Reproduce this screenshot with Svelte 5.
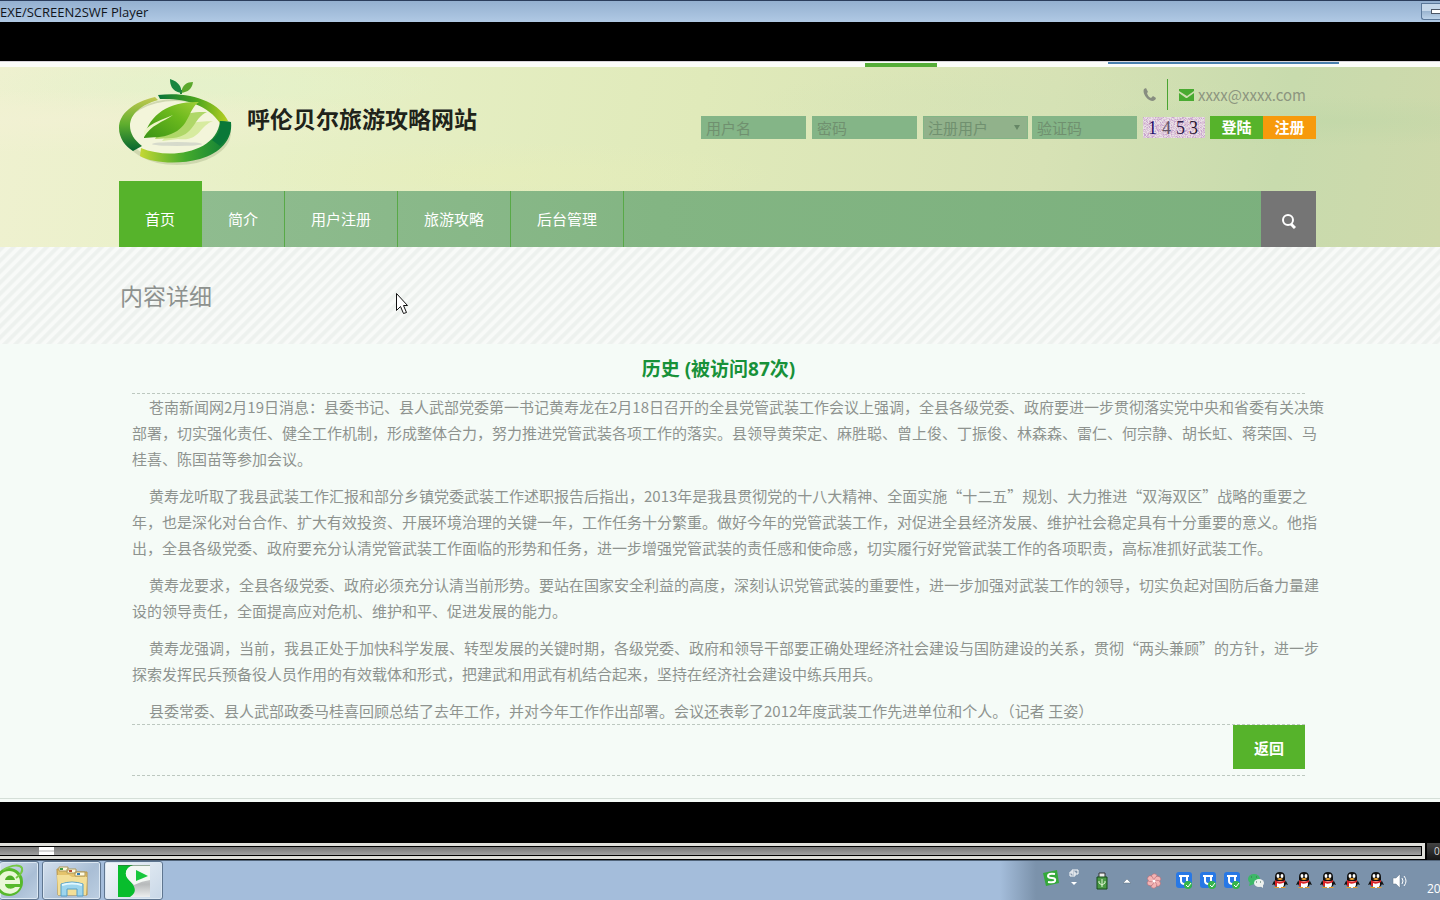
<script lang="ts">
  const nav = ["首页", "简介", "用户注册", "旅游攻略", "后台管理"];

  const paragraphs = [
    [
      "苍南新闻网2月19日消息：县委书记、县人武部党委第一书记黄寿龙在2月18日召开的全县党管武装工作会议上强调，全县各级党委、政府要进一步贯彻落实党中央和省委有关决策",
      "部署，切实强化责任、健全工作机制，形成整体合力，努力推进党管武装各项工作的落实。县领导黄荣定、麻胜聪、曾上俊、丁振俊、林森森、雷仁、何宗静、胡长虹、蒋荣国、马",
      "桂喜、陈国苗等参加会议。",
    ],
    [
      "黄寿龙听取了我县武装工作汇报和部分乡镇党委武装工作述职报告后指出，2013年是我县贯彻党的十八大精神、全面实施“十二五”规划、大力推进“双海双区”战略的重要之",
      "年，也是深化对台合作、扩大有效投资、开展环境治理的关键一年，工作任务十分繁重。做好今年的党管武装工作，对促进全县经济发展、维护社会稳定具有十分重要的意义。他指",
      "出，全县各级党委、政府要充分认清党管武装工作面临的形势和任务，进一步增强党管武装的责任感和使命感，切实履行好党管武装工作的各项职责，高标准抓好武装工作。",
    ],
    [
      "黄寿龙要求，全县各级党委、政府必须充分认清当前形势。要站在国家安全利益的高度，深刻认识党管武装的重要性，进一步加强对武装工作的领导，切实负起对国防后备力量建",
      "设的领导责任，全面提高应对危机、维护和平、促进发展的能力。",
    ],
    [
      "黄寿龙强调，当前，我县正处于加快科学发展、转型发展的关键时期，各级党委、政府和领导干部要正确处理经济社会建设与国防建设的关系，贯彻“两头兼顾”的方针，进一步",
      "探索发挥民兵预备役人员作用的有效载体和形式，把建武和用武有机结合起来，坚持在经济社会建设中练兵用兵。",
    ],
    [
      "县委常委、县人武部政委马桂喜回顾总结了去年工作，并对今年工作作出部署。会议还表彰了2012年度武装工作先进单位和个人。（记者 王姿）",
    ],
  ];

  // speckles behind the verification digits
  const tints = ["#c9a6cf", "#b3a3b8", "#e3c8e4", "#a98fae", "#e9dfe6", "#d5b6bd"];
  const noise = Array.from({ length: 900 }, (_, i) => ({
    x: (i * 37 + ((i * i) % 17)) % 62,
    y: (i * 13 + ((i * i * 7) % 23)) % 21,
    fill: tints[(i * i + i * 3) % 6],
  }));

  let position = $state(28);
</script>

<div class="window">
  <div class="titlebar">
    <span>EXE/SCREEN2SWF Player</span>
    <button class="minimize" aria-label="Minimize"><i></i></button>
  </div>

  <main class="stage">
    <div class="page">
      <div class="strip"><i class="tab"></i><i class="link"></i></div>

      <header>
        <div class="top">
          <a class="brand" href="#home">
            <svg width="114" height="88" viewBox="0 0 114 88" aria-hidden="true">
              <defs>
                <linearGradient id="ringTop"><stop offset="0" stop-color="#08733a" /><stop offset=".55" stop-color="#4ba51d" /><stop offset="1" stop-color="#b7cf22" /></linearGradient>
                <linearGradient id="ringLeft" x2="0" y2="1"><stop offset="0" stop-color="#c3c952" /><stop offset=".5" stop-color="#5fae2e" /><stop offset="1" stop-color="#04642f" /></linearGradient>
                <linearGradient id="ringBase"><stop offset="0" stop-color="#c5d834" /><stop offset=".5" stop-color="#44aa2c" /><stop offset="1" stop-color="#0c7b38" /></linearGradient>
                <linearGradient id="leaf" x1="0" y1="1" x2="1" y2="0"><stop offset="0" stop-color="#3b9416" /><stop offset=".6" stop-color="#6cb91d" /><stop offset="1" stop-color="#a1cf38" /></linearGradient>
              </defs>
              <ellipse cx="58" cy="53" rx="52" ry="31" fill="none" stroke="#92a071" stroke-opacity=".3" stroke-width="4" />
              <ellipse cx="56" cy="51" rx="49" ry="29" fill="#f3f5da" />
              <path d="M39 16C70 12 100 22 109 42L101 44C88 25 65 19 41 20Z" fill="url(#ringTop)" />
              <path d="M36 18C14 23 0 35 0 49c0 10 6 18 14 23l9-5C15 61 11 54 11 47c0-12 11-21 28-26Z" fill="url(#ringLeft)" />
              <path d="M22 69c28 12 76 5 79-27l11 1c2 18-11 31-31 37-22 6-48 4-60-3Z" fill="url(#ringBase)" />
              <path d="M101 42l11 1c0 10-4 18-11 24l-8-6c6-5 9-11 8-19Z" fill="#0a7838" />
              <path d="M43 62C60 42 78 43 94 42 80 47 81 63 59 60Z" fill="#d7eba0" />
              <path d="M36 60C49 37 69 32 88 33 74 39 76 57 54 59Z" fill="#afd768" />
              <path d="M25 58C31 34 52 22 80 23 69 30 71 48 52 55 43 59 34 58 25 59Z" fill="url(#leaf)" />
              <path d="M25 52C33 43 45 40 54 36 44 43 32 46 25 58Z" fill="#eef6c8" />
              <ellipse cx="58" cy="65" rx="25" ry="2" fill="#c9cec5" opacity=".7" />
              <path d="M62 14C52 12 51 5 51 0c9 3 12 8 11 14Z" fill="#178540" />
              <path d="M62 14c1-8 6-11 12-11-1 7-5 10-12 11Z" fill="#5aa82c" />
              <path d="M62 15v-4" stroke="#23843b" stroke-width="2" />
            </svg>
            <h1>呼伦贝尔旅游攻略网站</h1>
          </a>

          <div class="account">
            <div class="contact">
              <svg class="phone" width="13" height="13" viewBox="0 0 13 13" aria-hidden="true"><path d="M3 0 1 1C-1 5 4 13 10 13q3-1 3-3L10 8 8 10Q5 9 4 5L5 4Z" fill="#878d80" /></svg>
              <i class="rule"></i>
              <svg width="15" height="12" viewBox="0 0 15 12" aria-hidden="true"><path d="M0 0h15v2L8 7 0 2ZM0 4l7 5h1l7-5v8H0Z" fill="#49aa31" /></svg>
              <a href="mailto:xxxx@xxxx.com">xxxx@xxxx.com</a>
            </div>
            <form class="login" onsubmit={(e) => e.preventDefault()}>
              <input class="field" placeholder="用户名" aria-label="用户名" />
              <input class="field" type="password" placeholder="密码" aria-label="密码" />
              <div class="role">
                <select class="field" aria-label="用户类型">
                  <option>注册用户</option>
                </select>
                <i></i>
              </div>
              <input class="field code" placeholder="验证码" aria-label="验证码" />
              <svg class="captcha" width="62" height="21" viewBox="0 0 62 21" aria-label="1453">
                <rect width="62" height="21" fill="#dcc5d8" />
                {#each noise as dot}
                  <rect x={dot.x} y={dot.y} width="1" height="1" fill={dot.fill} />
                {/each}
                <text x="5" y="17" fill="#24106a">1</text>
                <text x="19" y="17" fill="#625466">4</text>
                <text x="33" y="17" fill="#34204d">5</text>
                <text x="46" y="17" fill="#28172f">3</text>
              </svg>
              <button class="signin">登陆</button>
              <button class="signup" type="button">注册</button>
            </form>
          </div>
        </div>

        <nav>
          {#each nav as item, i}
            <a href="#nav-{i}" class:active={i === 0}>{item}</a>
          {/each}
          <button class="search" aria-label="搜索">
            <svg width="15" height="15" viewBox="0 0 15 15" aria-hidden="true"><circle cx="7" cy="6" r="5" fill="none" stroke="#fff" stroke-width="2" /><path d="m10 10 4 4" stroke="#fff" stroke-width="3" /></svg>
          </button>
        </nav>
      </header>

      <div class="banner"><h2>内容详细</h2></div>

      <article>
        <h3>历史 (被访问87次)</h3>
        <div class="copy">
          {#each paragraphs as lines}
            <p>
              {#each lines as line, i}{#if i > 0}<br />{/if}{line}{/each}
            </p>
          {/each}
        </div>
        <div class="actions"><button>返回</button></div>
      </article>
      <div class="footline"></div>
    </div>

    <svg class="cursor" width="13" height="22" viewBox="0 0 13 22" aria-hidden="true"><path d="M.5.5v17l4-4 3 7 3-1-3-7h4Z" fill="#fff" stroke="#111" /></svg>
  </main>

  <div class="player">
    <div class="track">
      <input type="range" min="0" max="1000" bind:value={position} aria-label="Position" />
    </div>
    <div class="frame">0</div>
  </div>

  <footer class="taskbar">
    <div class="apps">
      <button class="first" aria-label="Browser">
        <svg width="26" height="34" viewBox="0 0 26 34" aria-hidden="true">
          <circle cx="9" cy="18" r="14" fill="#56b92c" />
          <path d="M-2 18a11 11 0 0 1 22 0v2H5c0 5 7 6 10 3h5C15 34-2 31-2 18Z" fill="#e9f8d7" />
          <path d="M5 16h10c-1-6-9-6-10 0Z" fill="#4eae28" />
          <path d="M3 6C13 0 20 1 22 4c1 4-3 8-6 10" fill="none" stroke="#75c944" stroke-width="2" />
        </svg>
      </button>
      <button aria-label="Explorer">
        <svg width="34" height="32" viewBox="0 0 34 32" aria-hidden="true">
          <path d="M2 4h11l2 3h17v23H3Z" fill="#e4c36c" stroke="#b99444" />
          <path d="M4 2h9v4H4Zm8 2h9v4h-9Zm8 3h10v4H20Z" fill="#fffbe2" stroke="#ae995b" />
          <path d="M5 3h3v2H5Z" fill="#3e9b43" /><path d="M14 5h3v2h-3Z" fill="#b94c32" /><path d="M22 8h3v2h-3Z" fill="#317eb9" />
          <path d="M2 10h12l3 2h15l-1 18H3Z" fill="#f3df98" />
          <path d="M6 19q11-4 22 0v12h-6v-7H12v7H6Z" fill="#9dd5ed" stroke="#559fc8" />
          <path d="M7 20q10-3 20 0" stroke="#e2f8ff" fill="none" stroke-width="2" />
        </svg>
      </button>
      <button class="current" aria-label="SCREEN2SWF Player">
        <svg width="32" height="32" viewBox="0 0 32 32" aria-hidden="true">
          <defs><linearGradient id="play" x2="0" y2="1"><stop stop-color="#f8faf9" /><stop offset=".6" stop-color="#b7babb" /><stop offset="1" stop-color="#eceeee" /></linearGradient></defs>
          <path d="M0 0h32v32H0Z" fill="url(#play)" />
          <path d="M0 0h16C8 2 5 9 11 15s9 12 1 17H0Z" fill="#08bd2d" />
          <path d="M16 0C8 2 5 9 11 15q3 3 5 5 8-4 16-5V0Z" fill="#f3f8f4" />
          <path d="M18 5v11l12-5Z" fill="#18c83b" />
          <path d="M0 0h32" stroke="#365f3d" />
        </svg>
      </button>
    </div>

    <div class="tray">
      <svg class="sogou" width="16" height="18" viewBox="0 0 16 18" aria-hidden="true"><path d="m0 3 14-3 2 13-13 3Z" fill="#35a93b" /><path d="M12 4Q5 3 5 6q0 2 4 2t3 3q-1 2-7 1" fill="none" stroke="#fff" stroke-width="2" /></svg>
      <svg class="ime" width="10" height="18" viewBox="0 0 10 18" aria-hidden="true"><path d="M3 1h6v4H3ZM1 3h5v4H1Z" fill="#8497ac" stroke="#fff" /><path d="M2 13h6l-3 3Z" fill="#fff" /></svg>
      <svg class="usb" width="12" height="18" viewBox="0 0 12 18" aria-hidden="true"><path d="M3 1h6v5H3Z" fill="#eee" stroke="#333" /><path d="M1 5h10v12H1Z" fill="#4a9a45" stroke="#174c1b" /><path d="M6 7v8M3 9v2l3 2 3-2V9" fill="none" stroke="#e3f6d6" /></svg>
      <svg class="more" width="10" height="6" viewBox="0 0 10 6" aria-hidden="true"><path d="m1 5 4-4 4 4Z" fill="#fff" stroke="#5b6c7e" stroke-width=".5" /></svg>
      <svg class="flower" width="16" height="16" viewBox="0 0 16 16" aria-hidden="true">
        {#each [0, 60, 120, 180, 240, 300] as angle}
          <path d="M8 8Q3 4 7 1q4-1 4 3Q10 6 8 8" fill="#f3b4b4" stroke="#b56c76" stroke-width=".6" transform="rotate({angle} 8 8)" />
        {/each}
        <circle cx="8" cy="8" r="1.5" fill="#fff" />
      </svg>
      {#each [1, 2, 3] as n (n)}
        <svg width="16" height="17" viewBox="0 0 16 17" aria-hidden="true"><rect width="16" height="16" rx="3" fill="#2878e5" /><path d="M3 4h10M5 4v5q0 3 4 3M11 4v5" fill="none" stroke="#fff" stroke-width="2" /><circle cx="12" cy="13" r="4" fill="#35b64a" /><path d="m10 13 2 2 3-4" fill="none" stroke="#fff" /></svg>
      {/each}
      <svg width="16" height="16" viewBox="0 0 16 16" aria-hidden="true"><ellipse cx="6" cy="6" rx="6" ry="5" fill="#3cb867" /><path d="m2 9-1 4 5-2Z" fill="#3cb867" /><ellipse cx="11" cy="10" rx="5" ry="4" fill="#edf1ee" /><path d="m12 13 3 2v-4Z" fill="#edf1ee" /><path d="M3 4h1m4 0h1M8 9h1m3 0h1" stroke="#3b6654" /></svg>
      {#each [1, 2, 3, 4, 5] as n (n)}
        <svg width="16" height="17" viewBox="0 0 16 17" aria-hidden="true"><ellipse cx="8" cy="11" rx="6" ry="5" fill="#111" /><path d="M2 9 0 13l3-1ZM14 9l2 4-3-1Z" fill="#111" /><ellipse cx="8" cy="12" rx="4" ry="4" fill="#fff" /><path d="M3 5q0-5 5-5t5 5v4H3Z" fill="#111" /><ellipse cx="6" cy="4" rx="1.4" ry="2" fill="#fff" /><ellipse cx="10" cy="4" rx="1.4" ry="2" fill="#fff" /><path d="M5 7q3-2 6 0-3 2-6 0" fill="#f2a42b" /><path d="M3 8q5 3 10 0v2q-5 3-8 1v3H3Z" fill="#d92326" /><path d="M3 15h4v1H2Zm6 0h4l1 1H9Z" fill="#e89b25" /></svg>
      {/each}
      <svg width="16" height="16" viewBox="0 0 16 16" aria-hidden="true"><path d="M1 5h3l4-4v14l-4-4H1Z" fill="#fff" stroke="#60758a" stroke-width=".5" /><path d="M10 5q2 3 0 6M12 3q4 5 0 10" fill="none" stroke="#fff" /></svg>
      <span class="clock">20</span>
    </div>
  </footer>
</div>

<style>
  :global(body) {
    margin: 0;
    background: #000;
  }
  .window {
    display: flex;
    flex-direction: column;
    min-height: 100vh;
    overflow: hidden;
    font-family: "Open Sans", "Noto Sans CJK SC", sans-serif;
    font-size: 15px;
  }
  .window * {
    box-sizing: border-box;
  }
  button,
  input,
  select {
    font: inherit;
    margin: 0;
    border: 0;
    border-radius: 0;
  }
  button {
    padding: 0;
    color: #fff;
    cursor: pointer;
  }
  a {
    color: inherit;
    text-decoration: none;
  }
  svg {
    display: block;
    flex: none;
  }

  .titlebar {
    height: 22px;
    flex: none;
    display: flex;
    justify-content: space-between;
    align-items: center;
    border-top: 1px solid #2b3d5c;
    background: linear-gradient(#94b0d0, #b0c9e4);
    color: #10151c;
    font-size: 13px;
    line-height: 18px;
  }
  .minimize {
    width: 19px;
    height: 17px;
    display: grid;
    align-items: center;
    justify-items: end;
    border: 1px solid #5b7899;
    border-right: 0;
    border-radius: 0 0 0 3px;
    background: linear-gradient(#c6d8ea 45%, #9bb5d0 50%, #bdd3e9);
  }
  .minimize i {
    width: 9px;
    height: 5px;
    background: #fff;
    border: 1px solid #4d5766;
    border-right: 0;
  }

  .stage {
    position: relative;
    flex: 1;
    display: flex;
    flex-direction: column;
    padding: 39px 0 41px;
    background: #000;
  }
  .page {
    flex: 1;
    display: flex;
    flex-direction: column;
    background: #f5fbf7;
  }
  .strip {
    height: 6px;
    display: flex;
    justify-content: flex-end;
    align-items: flex-end;
    gap: 171px;
    padding-right: 101px;
    background: #fbfcf8;
    border-top: 1px solid #d8d4da;
  }
  .tab {
    width: 72px;
    height: 4px;
    background: #55ad37;
  }
  .link {
    align-self: flex-start;
    width: 231px;
    height: 2px;
    background: #4a80ae;
  }

  header {
    background:
      radial-gradient(ellipse at 4% 30%, #f3f1d599, transparent 18%),
      radial-gradient(ellipse at 14% 10%, #e2f2cc99, transparent 14%),
      radial-gradient(ellipse at 34% 60%, #e9efb766, transparent 22%),
      radial-gradient(ellipse at 70% 20%, #d2e2b566, transparent 18%),
      radial-gradient(ellipse at 93% 30%, #bad5a566, transparent 14%),
      linear-gradient(100deg, #eff1d0, #e7f0c6 20%, #e0eaba 48%, #d7e2b5 72%, #c8dbad 88%, #ced9ab);
    padding: 0 124px 0 119px;
  }
  .top {
    min-height: 124px;
    display: flex;
    justify-content: space-between;
    padding-top: 12px;
  }
  .brand {
    display: flex;
    gap: 14px;
  }
  h1 {
    margin: 23px 0 0;
    color: #20231a;
    font-size: 23px;
    line-height: 34px;
  }
  .account {
    display: flex;
    flex-direction: column;
    align-items: flex-end;
    gap: 6px;
  }
  .contact {
    display: flex;
    align-items: center;
    height: 31px;
    margin-right: 10px;
    color: #8c957f;
  }
  .rule {
    width: 1px;
    height: 31px;
    margin: 0 11px;
    background: #49a431;
  }
  .contact a {
    margin-left: 4px;
    font-family: "Noto Sans CJK SC", sans-serif;
    line-height: 20px;
  }
  .login {
    display: flex;
    align-items: center;
  }
  .field {
    width: 105px;
    height: 23px;
    margin-right: 6px;
    padding: 0 5px;
    background: #84b587;
    color: #70906f;
    outline: none;
  }
  .field::placeholder {
    color: #70906f;
    opacity: 1;
  }
  .role {
    position: relative;
    margin-right: 4px;
    font-size: 0;
  }
  .role select {
    margin: 0;
    appearance: none;
    background: #91b28b;
    border: 1px solid #83b586;
    padding: 0 4px;
    font-size: 15px;
  }
  .role i {
    position: absolute;
    top: 9px;
    right: 8px;
    border: 3px solid transparent;
    border-top: 5px solid #668766;
    border-bottom: 0;
    pointer-events: none;
  }
  .captcha {
    margin-right: 5px;
  }
  .captcha text {
    font-family: "Liberation Serif", serif;
    font-size: 18px;
  }
  .signin,
  .signup {
    width: 53px;
    height: 23px;
    background: #56b32b;
    font-weight: 700;
    line-height: 23px;
  }
  .signup {
    background: #f79a0c;
  }

  nav {
    display: flex;
    height: 56px;
    background: linear-gradient(90deg, #91bd91, #83b583 45%, #7bb07d);
  }
  nav a {
    padding: 0 26px;
    border-right: 1px solid #58a947;
    color: #fff;
    line-height: 56px;
  }
  nav a.active {
    margin-top: -10px;
    padding-top: 10px;
    background: #56b32b;
    border-color: #56b32b;
  }
  .search {
    width: 55px;
    margin-left: auto;
    padding-top: 5px;
    display: grid;
    place-items: center;
    background: #757575;
  }

  .banner {
    padding: 32px 120px 31px;
    background: linear-gradient(135deg, #edf1ee 20%, #f8faf8 30% 45%, #edf1ee 55% 70%, #f8faf8 80% 95%, #edf1ee);
    background-size: 11px 11px;
  }
  h2 {
    margin: 0;
    color: #8d918e;
    font-size: 23px;
    font-weight: 400;
    line-height: 34px;
  }

  article {
    margin: 0 135px 0 132px;
  }
  h3 {
    margin: 0;
    padding: 11px 0 10px;
    color: #179139;
    font-size: 19px;
    line-height: 28px;
    text-align: center;
  }
  .copy {
    border-top: 1px dashed #bdc8c0;
    color: #8e938f;
    font-family: "Noto Sans CJK SC", sans-serif;
  }
  p {
    margin: 0 0 11px;
    text-indent: 17px;
    line-height: 26px;
    white-space: nowrap;
  }
  p:last-child {
    margin: 0;
  }
  .actions {
    display: flex;
    justify-content: flex-end;
    padding-bottom: 6px;
    border: 1px dashed #bdc8c0;
    border-width: 1px 0;
  }
  .actions button {
    width: 72px;
    height: 44px;
    background: #56b32b;
    font-weight: 700;
  }
  .footline {
    margin-top: auto;
    height: 4px;
    border-top: 1px solid #d5dfd8;
  }
  .cursor {
    position: absolute;
    left: 396px;
    top: 271px;
  }

  .player {
    display: flex;
    height: 17px;
    background: #000;
  }
  .track {
    flex: 1;
    height: 16px;
    padding: 3px 3px 3px 0;
    margin-right: 2px;
    background: #e0e0db;
  }
  .track input {
    appearance: none;
    display: block;
    width: 100%;
    height: 10px;
    border: 1px solid #000;
    border-left: 0;
    background: linear-gradient(#777, #a0a0a0);
  }
  .track input::-webkit-slider-thumb {
    appearance: none;
    width: 15px;
    height: 8px;
    background: linear-gradient(#fff 35%, #bbb 50%, #fff 65%);
  }
  .frame {
    width: 13px;
    padding-left: 7px;
    overflow: hidden;
    background: linear-gradient(#444, #161616);
    color: #ddd;
    font-size: 10px;
    line-height: 17px;
  }

  .taskbar {
    display: flex;
    justify-content: space-between;
    height: 40px;
    border-top: 1px solid #52657b;
    background: #a4bddb;
  }
  .apps {
    display: flex;
    gap: 3px;
  }
  .apps button {
    width: 59px;
    display: grid;
    place-items: center;
    border: 1px solid #5f7690;
    border-radius: 3px;
    background: linear-gradient(135deg, #d4e0ed, #a9bed5 60%, #bdcfe2);
    box-shadow: inset 0 0 0 1px #dce8f3;
  }
  .apps .first {
    width: 39px;
    border-left: 0;
    justify-items: start;
  }
  .apps .current {
    background: linear-gradient(135deg, #f3f7fa, #c8d7e7);
  }
  .tray {
    display: flex;
    align-items: center;
    gap: 8px;
    padding-left: 43px;
    background: linear-gradient(90deg, #a4bddb, #7b92ab 36px);
  }
  .sogou {
    margin-bottom: 3px;
  }
  .ime {
    margin: 0 9px 6px 2px;
  }
  .usb,
  .more {
    margin-right: 6px;
  }
  .flower {
    margin-right: 6px;
  }
  .clock {
    width: 13px;
    margin: 16px 0 0 11px;
    color: #fff;
    font-size: 12px;
  }
</style>
